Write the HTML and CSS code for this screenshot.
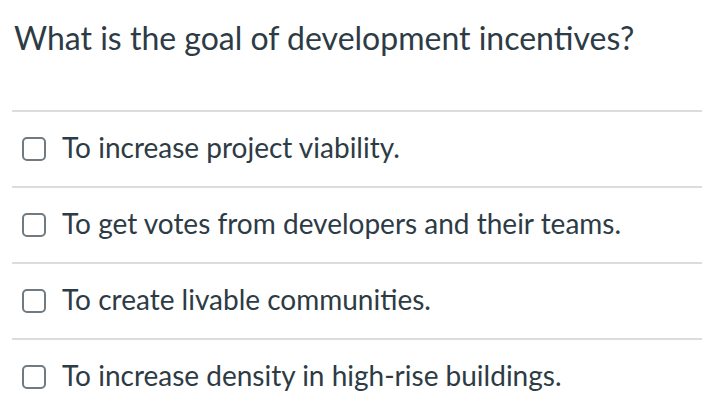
FILE: index.html
```html
<!DOCTYPE html>
<html lang="en">
<head>
<meta charset="utf-8">
<title>Question</title>
<link rel="stylesheet" href="styles.css">
</head>
<body>
<div class="quiz">
  <h1 class="question">What is the goal of development incentives?</h1>
  <ul class="answers">
    <li class="answer"><span class="box"></span><span class="label">To increase project viability.</span></li>
    <li class="answer"><span class="box"></span><span class="label">To get votes from developers and their teams.</span></li>
    <li class="answer"><span class="box"></span><span class="label">To create livable communities.</span></li>
    <li class="answer"><span class="box"></span><span class="label">To increase density in high-rise buildings.</span></li>
  </ul>
</div>
</body>
</html>
```

FILE: styles.css
```css
html, body {
  margin: 0;
  padding: 0;
  background: #ffffff;
}

body {
  font-family: Lato, "Noto Sans", sans-serif;
  color: #2d3b45;
  overflow: hidden;
}

.quiz {
  padding-left: 12px;
}

.question {
  margin: 19px 0 53px 0;
  padding-left: 2px;
  font-size: 32px;
  line-height: 38px;
  font-weight: 400;
}

.answers {
  list-style: none;
  margin: 0;
  padding: 0;
  border-top: 2px solid #dcdcdc;
}

.answer {
  display: flex;
  align-items: center;
  gap: 16px;
  height: 74px;
  padding-left: 10px;
  border-bottom: 2px solid #dcdcdc;
}

.box {
  box-sizing: border-box;
  flex: none;
  width: 24px;
  height: 24px;
  border: 2px solid #6f7a82;
  border-radius: 5px;
  background: #ffffff;
}

.label {
  font-size: 28px;
  line-height: 34px;
  padding-bottom: 4px;
}
```
